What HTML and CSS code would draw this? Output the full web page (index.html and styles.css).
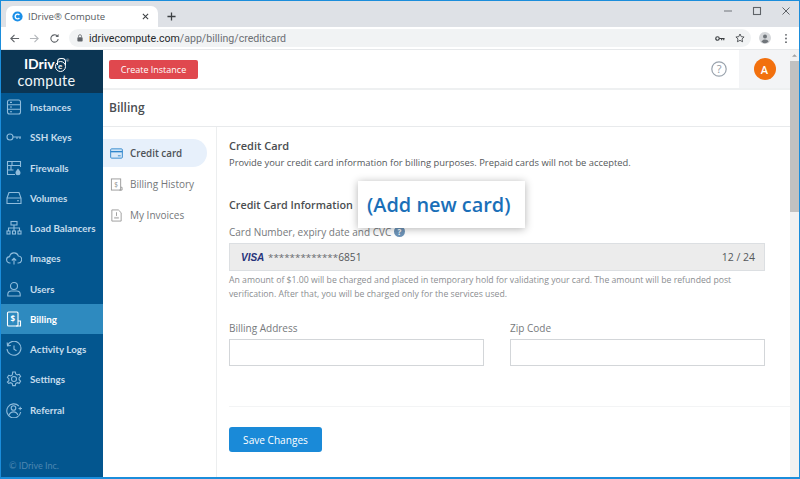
FILE: index.html
```html
<!DOCTYPE html>
<html lang="en">
<head>
<meta charset="utf-8">
<title>IDrive Compute</title>
<link rel="stylesheet" href="styles.css">
</head>
<body>
<div class="window">
  <div class="tabstrip">
    <div class="tab">
      <svg class="favicon" viewBox="0 0 14 14"><circle cx="7" cy="7" r="6.5" fill="#1a8fe8"/><path d="M9.4 5.1A3 3 0 1 0 9.4 8.9" fill="none" stroke="#fff" stroke-width="1.7"/></svg>
      <span class="tab-title">IDrive® Compute</span>
      <svg class="tab-close" viewBox="0 0 8 8"><path d="M1 1l6 6M7 1L1 7" stroke="#3c4043" stroke-width="1.2"/></svg>
    </div>
    <svg class="new-tab" viewBox="0 0 10 10"><path d="M5 .5v9M.5 5h9" stroke="#3c4043" stroke-width="1.4"/></svg>
    <div class="win-controls">
      <svg viewBox="0 0 10 10"><path d="M1 5h8" stroke="#70757a" stroke-width="1"/></svg>
      <svg viewBox="0 0 10 10"><rect x="1.5" y="1.5" width="7" height="7" fill="none" stroke="#5f6368" stroke-width="1.1"/></svg>
      <svg viewBox="0 0 10 10"><path d="M1.5 1.5l7 7M8.5 1.5l-7 7" stroke="#5f6368" stroke-width="1"/></svg>
    </div>
  </div>
  <div class="toolbar">
    <svg class="tool" viewBox="0 0 12 12"><path d="M11 6H2M6 2L2 6l4 4" fill="none" stroke="#5f6368" stroke-width="1.2"/></svg>
    <svg class="tool" viewBox="0 0 12 12"><path d="M1 6h9M6 2l4 4-4 4" fill="none" stroke="#b4b7bb" stroke-width="1.2"/></svg>
    <svg class="tool" viewBox="0 0 12 12"><path d="M10 6.5A4 4 0 1 1 8.9 3.2" fill="none" stroke="#5f6368" stroke-width="1.2"/><path d="M10.4 1v3.4H7z" fill="#5f6368"/></svg>
    <div class="omnibox">
      <svg class="lock" viewBox="0 0 8 10"><rect x=".5" y="4" width="7" height="5.5" rx="1" fill="#5f6368"/><path d="M2 4V2.6a2 2 0 0 1 4 0V4" fill="none" stroke="#5f6368" stroke-width="1"/></svg>
      <span class="url"><b>idrivecompute.com</b>/app/billing/creditcard</span>
      <svg class="omni-key" viewBox="0 0 12 8"><circle cx="3" cy="4" r="2.1" fill="none" stroke="#3c4043" stroke-width="1.4"/><path d="M5 4h6.5M8 4v2M10.5 4v2" stroke="#3c4043" stroke-width="1.4"/></svg>
      <svg class="omni-star" viewBox="0 0 12 12"><path d="M6 1.2l1.5 3.2 3.4.4-2.5 2.3.7 3.4-3.1-1.7-3.1 1.7.7-3.4L1.1 4.8l3.4-.4z" fill="none" stroke="#3c4043" stroke-width="1"/></svg>
    </div>
    <svg class="profile" viewBox="0 0 12 12"><circle cx="6" cy="6" r="6" fill="#d5d7da"/><circle cx="6" cy="4.6" r="2" fill="#70757a"/><path d="M2.4 9.6a3.8 3 0 0 1 7.2 0A5 5 0 0 1 2.4 9.6z" fill="#70757a"/></svg>
    <svg class="menu" viewBox="0 0 4 12"><circle cx="2" cy="2" r="1" fill="#5f6368"/><circle cx="2" cy="6" r="1" fill="#5f6368"/><circle cx="2" cy="10" r="1" fill="#5f6368"/></svg>
  </div>
  <div class="app">
    <aside class="sidebar">
      <div class="logo">
        <div class="logo-top">IDriv<span class="logo-e">e</span><sup>®</sup></div>
        <div class="logo-bottom">compute</div>
      </div>
      <nav class="nav">
        <a class="nav-item"><svg viewBox="0 0 16 16"><rect x="1.500" y="1" width="13" height="14" rx="2"/><path d="M1.500 5.700h13M1.500 10.300h13M4 3.400h2M4 8h2M4 12.700h2"/></svg><span>Instances</span></a>
        <a class="nav-item"><svg viewBox="0 0 16 16"><circle cx="4" cy="8" r="3"/><path d="M7 8h8M11 8v2M14 8v2"/></svg><span>SSH Keys</span></a>
        <a class="nav-item"><svg viewBox="0 0 16 16"><path d="M9 14.500H1.500v-13h13V7M1.500 5.500h13M1.500 10h6M6 1.500v4M5 5.500V10"/><path d="M12 8.500c1.500 2 2.500 3 2.500 4.200a2.500 2.500 0 0 1-5 0c0-1.200 1-2.200 2.500-4.200z" class="fill"/></svg><span>Firewalls</span></a>
        <a class="nav-item"><svg viewBox="0 0 16 16"><path d="M1 8l2-5.500h10L15 8v5.500H1zM1 8h14M11 10.700h2"/></svg><span>Volumes</span></a>
        <a class="nav-item"><svg viewBox="0 0 16 16"><rect x="5" y="1.500" width="6" height="3.500"/><path d="M8 5v3M2.500 11V8h11v3M8 8v3"/><rect x="1" y="11" width="3" height="3"/><rect x="6.500" y="11" width="3" height="3"/><rect x="12" y="11" width="3" height="3"/></svg><span>Load Balancers</span></a>
        <a class="nav-item"><svg viewBox="0 0 16 16"><path d="M4.500 13H4a3.200 3.200 0 0 1-.4-6.400 4.500 4.500 0 0 1 8.700-.6A3.500 3.500 0 0 1 12 13h-.5M8 14.500V8.500M5.800 10.500L8 8.300l2.200 2.200"/></svg><span>Images</span></a>
        <a class="nav-item"><svg viewBox="0 0 16 16"><circle cx="8" cy="5" r="3.500"/><path d="M1.800 15v-1.500A3.500 3.500 0 0 1 5.300 10h5.400a3.500 3.500 0 0 1 3.500 3.500V15z"/></svg><span>Users</span></a>
        <a class="nav-item active"><svg viewBox="0 0 16 16"><rect x="1.500" y="1" width="10.500" height="14" rx="1"/><path d="M12 10h2.500v5H10"/><text x="6.800" y="11" text-anchor="middle" class="glyph">$</text></svg><span>Billing</span></a>
        <a class="nav-item"><svg viewBox="0 0 16 16"><path d="M1.500 4.500A7 7 0 1 1 1 8M1.200 1.500l.3 3.300 3.300-.3M8 4.500V8.300l2.500 1.500"/></svg><span>Activity Logs</span></a>
        <a class="nav-item"><svg viewBox="0 0 16 16"><circle cx="8" cy="8" r="2.500"/><path d="M6.700 1h2.600l.4 2 1.600.9 2-.6 1.300 2.200-1.500 1.400v1.800l1.500 1.400-1.300 2.200-2-.6-1.600.9-.4 2H6.700l-.4-2-1.600-.9-2 .6L1.400 11.100l1.500-1.400V7.900L1.400 6.500l1.300-2.200 2 .6 1.600-.9z"/></svg><span>Settings</span></a>
        <a class="nav-item"><svg viewBox="0 0 16 16"><path d="M12.800 4A7 7 0 1 0 14.700 10"/><circle cx="7.500" cy="6" r="2.300"/><path d="M3.200 13a4.500 4.500 0 0 1 8.600 0M12.500 6.500h3.500M14.200 4.700v3.600"/></svg><span>Referral</span></a>
      </nav>
      <div class="copyright">© IDrive Inc.</div>
    </aside>
    <main class="main">
      <header class="topbar">
        <button class="btn-create">Create Instance</button>
        <svg class="help" viewBox="0 0 16 16"><circle cx="8" cy="8" r="7.200" fill="none" stroke="#9aa3ad" stroke-width="1.200"/><text x="8" y="11.700" text-anchor="middle" class="help-q">?</text></svg>
        <div class="account"><div class="avatar">A</div></div>
      </header>
      <div class="titlebar">Billing</div>
      <div class="body">
        <div class="subnav">
          <a class="sub-item selected">
            <svg viewBox="0 0 14 12"><rect x=".7" y="1" width="12.600" height="10" rx="1" fill="#d9e9f8" stroke="#2f86cc"/><path d="M.7 4h12.600" stroke="#2f86cc" stroke-width="1.500"/><path d="M8.500 8.500h3" stroke="#2f86cc"/></svg>
            <span>Credit card</span>
          </a>
          <a class="sub-item">
            <svg viewBox="0 0 14 14"><rect x="1.500" y="1" width="10" height="12" fill="none" stroke="#9a9a9a"/><path d="M11.500 10h1.500v3h-3" fill="none" stroke="#9a9a9a"/><text x="6.500" y="10" text-anchor="middle" class="sub-glyph">$</text></svg>
            <span>Billing History</span>
          </a>
          <a class="sub-item">
            <svg viewBox="0 0 14 14"><path d="M2 1h7l3 3v9H2z" fill="none" stroke="#9a9a9a"/><path d="M4.500 10.500h5v-2h-5z" fill="#c4c4c4"/><path d="M7 3.500v4" stroke="#9a9a9a"/></svg>
            <span>My Invoices</span>
          </a>
        </div>
        <section class="content">
          <h2 class="heading">Credit Card</h2>
          <p class="lead">Provide your credit card information for billing purposes. Prepaid cards will not be accepted.</p>
          <div class="info-row">
            <h3 class="subheading">Credit Card Information</h3>
            <div class="callout">(Add new card)</div>
          </div>
          <div class="field-label">Card Number, expiry date and CVC <span class="hint">?</span></div>
          <div class="card-box">
            <span class="visa">VISA</span>
            <span class="card-num"><span class="stars">*************</span>6851</span>
            <span class="expiry">12 / 24</span>
          </div>
          <p class="note">An amount of $1.00 will be charged and placed in temporary hold for validating your card. The amount will be refunded post verification. After that, you will be charged only for the services used.</p>
          <div class="address-row">
            <div class="col-address">
              <div class="field-label">Billing Address</div>
              <div class="input"></div>
            </div>
            <div class="col-zip">
              <div class="field-label">Zip Code</div>
              <div class="input"></div>
            </div>
          </div>
          <div class="divider"></div>
          <button class="btn-save">Save Changes</button>
        </section>
      </div>
    </main>
    <div class="scrollbar">
      <svg class="scroll-arrow" viewBox="0 0 8 4"><path d="M4 0l4 4H0z" fill="#a0a0a0"/></svg>
      <div class="scroll-thumb"></div>
    </div>
  </div>
</div>
</body>
</html>
```
FILE: styles.css
```css
* { box-sizing: border-box; }
html, body { margin: 0; padding: 0; }
body { width: 800px; height: 479px; overflow: hidden; font-family: "Open Sans", sans-serif; background: #fff; }
.window { width: 800px; height: 479px; display: flex; flex-direction: column; border: 1px solid #1b8ddb; border-bottom-width: 2px; overflow: hidden; }

.tabstrip { height: 26px; background: #dee1e6; display: flex; align-items: flex-end; flex: none; }
.tab { width: 152px; height: 21px; margin-left: 5px; background: #fff; border-radius: 7px 7px 0 0; display: flex; align-items: center; padding: 0 9px 0 6px; }
.favicon { width: 11px; height: 11px; margin-right: 5px; }
.tab-title { flex: 1; font-size: 9.500px; color: #55595e; white-space: nowrap; }
.tab-close { width: 7px; height: 7px; }
.new-tab { width: 9px; height: 9px; margin: 0 0 6px 9px; }
.win-controls { margin-left: auto; display: flex; gap: 19px; align-self: flex-start; margin-top: 5px; margin-right: 8px; }
.win-controls svg { width: 10px; height: 10px; display: block; }

.toolbar { height: 23px; background: #fff; display: flex; align-items: center; flex: none; padding-left: 8px; border-bottom: 1px solid #e6e8ea; }
.tool { width: 11px; height: 11px; margin-right: 9px; flex: none; }
.omnibox { width: 682px; height: 18px; background: #f1f3f4; border-radius: 9px; display: flex; align-items: center; padding: 0 6px 0 8px; flex: none; }
.lock { width: 6px; height: 8px; margin-right: 6px; flex: none; }
.url { flex: 1; font-family: "Roboto", sans-serif; font-size: 10.600px; color: #6c7075; white-space: nowrap; }
.url b { font-weight: 400; color: #25282b; }
.omni-key { width: 10px; height: 7px; margin-right: 10px; }
.omni-star { width: 10px; height: 10px; }
.profile { width: 12px; height: 12px; margin-left: 8px; }
.menu { width: 4px; height: 11px; margin-left: 13px; }

.app { flex: 1; display: flex; min-height: 0; }

.sidebar { width: 102px; flex: none; background: #03568f; display: flex; flex-direction: column; color: #d8e8f3; position: relative; }
.logo { height: 43px; background: #0b3553; color: #fff; text-align: center; padding: 7px 11px 0 0; flex: none; }
.logo-top { font-family: "Lato", sans-serif; font-size: 14px; line-height: 14px; font-weight: 700; position: relative; }
.logo-top sup { font-size: 4px; vertical-align: 7px; line-height: 0; font-weight: 400; }
.logo-e { display: inline-block; position: relative; border: 1px solid #fff; border-radius: 50%; width: 11px; height: 11px; font-size: 8px; line-height: 8px; text-align: center; }
.logo-e::before { content: ""; position: absolute; left: 1px; top: -4px; width: 7px; height: 6px; border: 1px solid #fff; border-bottom: 0; border-radius: 4px 4px 0 0; }
.logo-bottom { font-family: "Lato", sans-serif; font-size: 14.500px; line-height: 15px; font-weight: 400; color: #f0f5f8; letter-spacing: .3px; margin-top: 1px; }
.nav { display: flex; flex-direction: column; flex: 1; margin-top: -1px; }
.nav-item { height: 30.250px; display: flex; align-items: center; padding-left: 5px; gap: 8px; font-family: "Lato", sans-serif; font-size: 9.800px; font-weight: 700; color: #c5dcec; white-space: nowrap; }
.nav-item svg { width: 16px; height: 16px; fill: none; stroke: #8fbcdc; stroke-width: 1.100; flex: none; }
.nav-item svg .fill { fill: #8fbcdc; stroke: none; }
.nav-item svg .glyph { font-family: "Open Sans", sans-serif; font-size: 8px; font-weight: 700; fill: #fff; stroke: none; }
.nav-item.active { background: #2e8abf; color: #fff; }
.nav-item.active svg { stroke: #fff; }
.copyright { position: absolute; left: 8px; bottom: 6px; font-family: "Lato", sans-serif; font-size: 9px; color: #4d87b1; }

.main { flex: 1; min-width: 0; display: flex; flex-direction: column; }
.topbar { height: 40px; display: flex; align-items: center; padding-left: 6px; border-bottom: 2px solid #eef0f1; flex: none; }
.btn-create { width: 89px; height: 19px; background: #e0484e; border: 0; border-radius: 2px; color: #fff; font: 400 9px "Open Sans", sans-serif; padding: 0; }
.help { width: 16px; height: 16px; margin-left: auto; }
.help-q { font: 400 11px "Open Sans", sans-serif; fill: #8f98a2; }
.account { width: 51px; height: 38px; margin-left: 12px; background: #f3f4f6; display: flex; align-items: center; justify-content: center; }
.avatar { width: 22px; height: 22px; border-radius: 50%; background: #f2700e; color: #fff; font-size: 11px; font-weight: 600; display: flex; align-items: center; justify-content: center; }

.titlebar { height: 37px; display: flex; align-items: center; padding: 0 0 1px 6px; font-size: 12px; font-weight: 600; color: #4a4d50; border-bottom: 1px solid #e8eaec; flex: none; }
.body { flex: 1; display: flex; min-height: 0; }
.subnav { width: 114px; flex: none; border-right: 1px solid #eceeef; padding-top: 12px; }
.sub-item { width: 104px; height: 28px; margin-bottom: 3px; display: flex; align-items: center; gap: 7px; padding-left: 7px; font-size: 10px; color: #74777a; border-radius: 0 14px 14px 0; white-space: nowrap; }
.sub-item svg { width: 13px; height: 13px; flex: none; }
.sub-glyph { font: 400 7px "Open Sans", sans-serif; fill: #8a8a8a; }
.sub-item.selected { background: #e7f0fb; color: #4d5257; font-weight: 600; font-size: 9.800px; }

.content { flex: 1; padding: 11px 0 0 12px; min-width: 0; }
.heading { margin: 0; font-size: 11px; line-height: 15px; font-weight: 600; color: #4a4d50; }
.lead { margin: 3px 0 0; font-size: 9.370px; line-height: 14px; color: #55585b; white-space: nowrap; }
.info-row { height: 41px; margin-top: 14px; display: flex; align-items: center; position: relative; }
.subheading { margin: 0; font-size: 10.750px; font-weight: 600; color: #4a4d50; white-space: nowrap; }
.callout { position: absolute; left: 129px; top: -3px; width: 167px; height: 47px; padding-left: 9px; background: #fff; box-shadow: 0 1px 8px rgba(0,0,0,.3); color: #1a6fb8; font-size: 19.900px; font-weight: 600; display: flex; align-items: center; white-space: nowrap; }
.field-label { font-size: 10px; line-height: 14px; color: #76797c; white-space: nowrap; }
.hint { display: inline-block; width: 11px; height: 11px; border-radius: 50%; background: #6d94b8; color: #fff; font-size: 8px; line-height: 11px; text-align: center; font-weight: 700; vertical-align: 1px; }
.card-box { width: 536px; height: 28px; margin-top: 4px; background: #ececec; border: 1px solid #dcdfe2; display: flex; align-items: center; padding: 0 9px 0 11px; font-size: 10.200px; color: #55585b; }
.visa { font: italic 700 10px "Liberation Sans", sans-serif; color: #26337a; width: 27px; }
.stars { color: #66696c; font-size: 9.800px; }
.expiry { margin-left: auto; font-size: 10.500px; }
.note { width: 536px; margin: 2px 0 0; font-size: 8.700px; line-height: 14px; color: #8b8e91; }
.address-row { display: flex; gap: 26px; margin-top: 20px; width: 536px; }
.col-address { width: 255px; }
.col-zip { width: 255px; }
.input { height: 27px; margin-top: 4px; border: 1px solid #d3d6d9; background: #fff; }
.divider { height: 1px; width: 561px; background: #f3f4f5; margin-top: 40px; }
.btn-save { display: block; width: 93px; height: 25px; margin-top: 20px; background: #1a8ad8; border: 0; border-radius: 3px; color: #fff; font: 400 10.100px "Open Sans", sans-serif; padding: 0; }

.scrollbar { width: 9px; flex: none; background: #f1f1f1; display: flex; flex-direction: column; align-items: center; }
.scroll-arrow { width: 5px; height: 3px; margin: 4px 0 4px; }
.scroll-thumb { width: 100%; height: 151px; background: #c1c1c1; }
```
